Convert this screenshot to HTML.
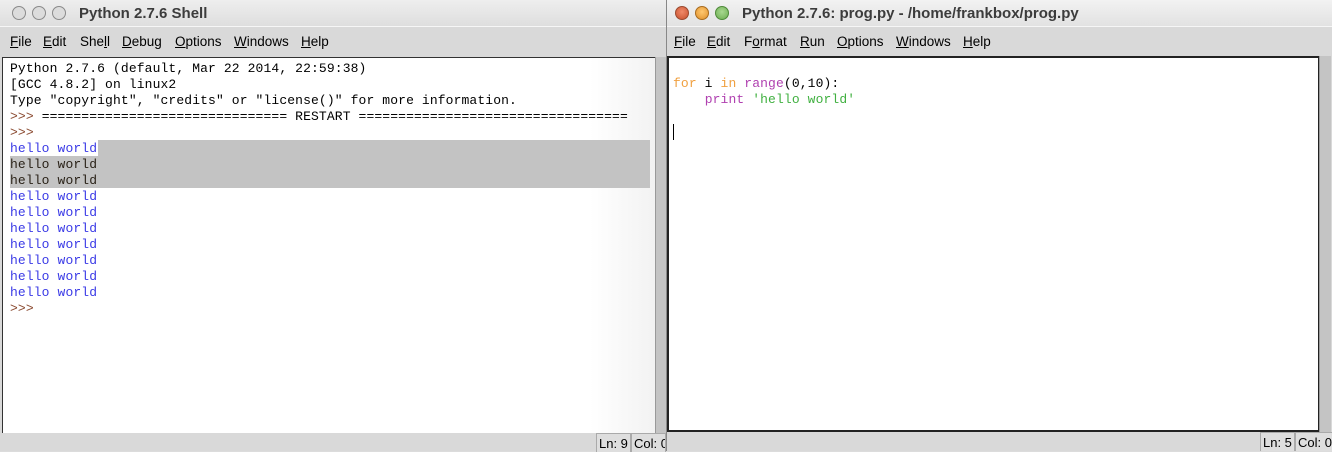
<!DOCTYPE html>
<html><head><meta charset="utf-8"><style>
*{margin:0;padding:0;box-sizing:border-box}
body{width:1332px;height:451px;overflow:hidden;background:#dcdcdc;font-family:"Liberation Sans",sans-serif;position:relative}
.win{position:absolute;top:0;height:451px;background:#d9d9d9}
.title{position:absolute;left:0;right:0;top:0;height:27px;background:linear-gradient(#eeeeee,#dedede);border-bottom:1px solid #f6f6f6}
.title .t{position:absolute;top:5px;font-weight:bold;font-size:15px;color:#3c3c3c}
.dot{position:absolute;top:6px;width:14px;height:14px;border-radius:50%}
.menu{position:absolute;left:0;right:0;top:28px;height:28px;background:#d9d9d9;font-size:13.5px;color:#000}
.menu span{position:absolute;top:6px}
.menu u{text-decoration:underline}
.txt{position:absolute;background:#fff;font-family:"Liberation Mono",monospace;font-size:13px;letter-spacing:0.12px;line-height:16px;white-space:pre;color:#000}
.sb{position:absolute;background:#c4c4c4;border-left:1px solid #999}
.status{position:absolute;font-size:13px;color:#000;height:19px;border:1px solid #aaa;border-bottom:none;padding:2px 0 0 2px;background:#dedede}
.blue{color:#3a3ae6}.pr{color:#8a4a30}
</style></head><body>
<div class="win" style="left:0;width:666px">
 <div class="title">
  <div class="dot" style="left:12px;background:#dcdcdc;border:1px solid #8a8a8a"></div>
  <div class="dot" style="left:32px;background:#dcdcdc;border:1px solid #8a8a8a"></div>
  <div class="dot" style="left:52px;background:#dcdcdc;border:1px solid #8a8a8a"></div>
  <div class="t" style="left:79px">Python 2.7.6 Shell</div>
 </div>
 <div class="menu">
  <span style="left:10px"><u>F</u>ile</span><span style="left:43px"><u>E</u>dit</span><span style="left:80px">She<u>l</u>l</span><span style="left:122px"><u>D</u>ebug</span><span style="left:175px"><u>O</u>ptions</span><span style="left:234px"><u>W</u>indows</span><span style="left:301px"><u>H</u>elp</span>
 </div>
 <div class="txt" style="left:2px;top:57px;width:653px;height:376px;border-left:1px solid #333;border-top:1px solid #333;background:linear-gradient(90deg,#fff 90%,#f2f2f2)"><div style="position:absolute;left:95px;top:82px;width:552px;height:16px;background:#c3c3c3"></div><div style="position:absolute;left:7px;top:98px;width:640px;height:32px;background:#c3c3c3"></div><div style="position:absolute;left:7px;top:3px">Python 2.7.6 (default, Mar 22 2014, 22:59:38)
[GCC 4.8.2] on linux2
Type "copyright", "credits" or "license()" for more information.
<span class="pr">&gt;&gt;&gt; </span>=============================== RESTART ==================================
<span class="pr">&gt;&gt;&gt;</span>
<span class="blue">hello world</span>
<span style="color:#2a2218">hello world
hello world</span>
<span class="blue">hello world
hello world
hello world
hello world
hello world
hello world
hello world</span>
<span class="pr">&gt;&gt;&gt;</span></div></div>
 <div class="sb" style="left:655px;top:57px;width:11px;height:376px"></div>
 <div class="status" style="left:596px;top:433px;width:35px">Ln: 9</div>
 <div class="status" style="left:631px;top:433px;width:35px;overflow:hidden;white-space:nowrap">Col: 0</div>
</div>
<div class="win" style="left:666px;width:666px;border-left:1px solid #888">
 <div class="title" style="background:linear-gradient(#f2f2f2,#e2e2e2)">
  <div class="dot" style="left:8px;background:radial-gradient(circle at 50% 40%,#f08a6a,#c8502e);border:1px solid #9a4a30"></div>
  <div class="dot" style="left:28px;background:radial-gradient(circle at 50% 40%,#ffc870,#e0902a);border:1px solid #a86c20"></div>
  <div class="dot" style="left:48px;background:radial-gradient(circle at 50% 40%,#a8d890,#6cae50);border:1px solid #4f8a3a"></div>
  <div class="t" style="left:75px">Python 2.7.6: prog.py - /home/frankbox/prog.py</div>
 </div>
 <div class="menu">
  <span style="left:7px"><u>F</u>ile</span><span style="left:40px"><u>E</u>dit</span><span style="left:77px">F<u>o</u>rmat</span><span style="left:133px"><u>R</u>un</span><span style="left:170px"><u>O</u>ptions</span><span style="left:229px"><u>W</u>indows</span><span style="left:296px"><u>H</u>elp</span>
 </div>
 <div class="txt" style="left:0;top:56px;width:652px;height:376px;border:2px solid #222;border-right:1px solid #222"><div style="position:absolute;left:4px;top:18px"><span style="color:#f0a040">for</span> i <span style="color:#f0a040">in</span> <span style="color:#b040b0">range</span>(0,10):
    <span style="color:#b040b0">print</span> <span style="color:#40b040">'hello world'</span>
</div><div style="position:absolute;left:4px;top:66px;width:1px;height:16px;background:#000"></div></div>
 <div class="sb" style="left:652px;top:56px;width:12px;height:376px"></div>
 <div class="status" style="left:593px;top:432px;width:35px">Ln: 5</div>
 <div class="status" style="left:628px;top:432px;width:38px">Col: 0</div>
</div>
</body></html>
